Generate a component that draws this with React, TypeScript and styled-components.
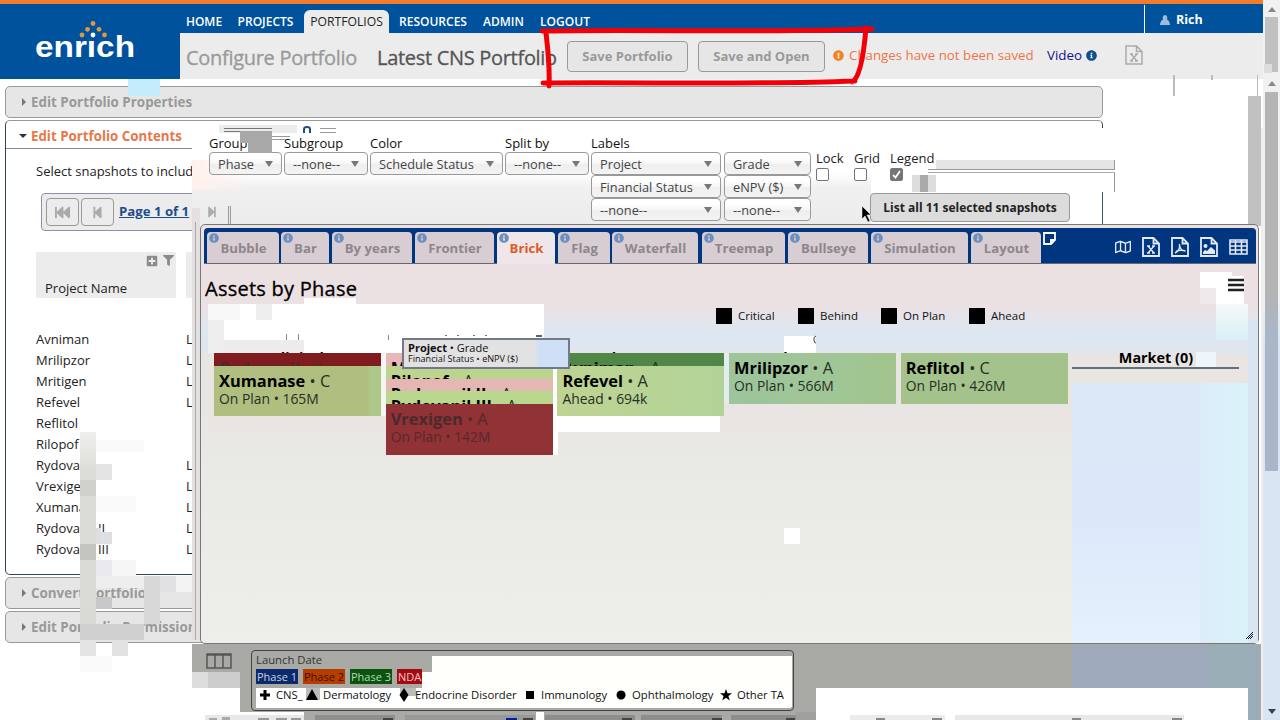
import React from 'react';
import styled, { createGlobalStyle, css } from 'styled-components';
import { FaInfoCircle, FaExclamationCircle, FaFilter, FaPlusSquare, FaRegMap, FaFastBackward, FaStepBackward, FaStepForward } from 'react-icons/fa';

const Global = createGlobalStyle`
  * { box-sizing: border-box; }
  body { margin: 0; background: #fff; font-family: 'Open Sans', sans-serif; overflow: hidden; color: #222; }
`;

const Screen = styled.div`
  position: relative; width: 1280px; height: 720px; overflow: hidden;
  display: flex; font-size: 13px; line-height: 18px; white-space: nowrap;
`;
const Main = styled.div`width: 1263px; flex: none;`;

/* ---------- header ---------- */
const Header = styled.header`
  height: 79px; border-top: 4px solid #f47a2c; display: flex; background: #ececec;
`;
const Brand = styled.div`width: 180px; height: 75px; background: #00529c;`;
const HeaderRight = styled.div`flex: 1;`;
const Nav = styled.nav`
  height: 29px; background: #00529c; display: flex; align-items: flex-end; padding-left: 1px;
`;
const NavItem = styled.a<{ $w: number; $on?: boolean }>`
  width: ${p => p.$w}px; height: 23px; line-height: 24px; text-align: center;
  font-size: 12px; font-weight: 600; color: #fff;
  ${p => p.$on && css`background: #ececec; color: #222; border-radius: 6px 6px 0 0; font-weight: 500; font-size: 12.2px;`}
`;
const User = styled.div`
  margin-left: auto; width: 119px; height: 28px; border-left: 1px solid #fff; padding: 2px 0 0 15px;
  display: flex; align-items: center; gap: 6px; color: #fff; font-weight: 700; font-size: 12.5px;
`;
const TitleBar = styled.div`height: 46px; display: flex; align-items: center; padding-left: 6px;`;
const Heading = styled.div<{ $w: number; $c: string }>`
  width: ${p => p.$w}px; font-size: 20px; line-height: 28px; color: ${p => p.$c}; padding-top: 3px; letter-spacing: -0.3px;
  -webkit-text-stroke: 0.3px ${p => p.$c};
`;
const GreyButton = styled.button<{ $w: number }>`
  width: ${p => p.$w}px; height: 31px; margin-right: 10px; border: 1px solid #999; border-radius: 4px;
  background: #e6e6e6; color: #999; font: 700 13px 'Open Sans', sans-serif; padding: 0;
`;
const Warning = styled.span`
  display: flex; align-items: center; gap: 5px; color: #ec7649; width: 214px; margin-left: -2px; font-size: 13.3px; padding-bottom: 2px;
  svg { color: #f58220; }
`;
const Video = styled.span`
  display: flex; align-items: center; gap: 4px; color: #12128a; width: 78px; padding-bottom: 2px; font-size: 13.4px;
  svg { color: #134f8d; }
`;
const ExportSlot = styled.span`display: flex; padding-bottom: 3px; color: #aaa;`;

/* ---------- accordion ---------- */
const Accordion = styled.main`width: 1103px; padding: 7px 0 0 5px; display: flex; flex-direction: column; gap: 2px;`;
const Bar = styled.div`
  height: 32px; border: 1px solid #999; border-radius: 5px; background: #e6e6e6; color: #999; font-size: 13.4px;
  font-weight: 700; display: flex; align-items: center; padding: 0 0 1px 16px; gap: 5px;
`;
const OpenPanel = styled.section`height: 455px; border: 1px solid #999; border-color: #999 #345 #345; border-radius: 5px;`;
const OpenTitle = styled.div`
  height: 28px; border-bottom: 1px solid #888; display: flex; align-items: center; gap: 4px; padding: 3px 0 0 13px;
  color: #e5784a; font-weight: 700; font-size: 13.3px;
`;
const Prompt = styled.p`margin: 13px 0 0 30px; height: 18px;`;
const Pager = styled.div`
  margin: 13px 0 0 35px; width: 190px; height: 38px; border: 1px solid #8a93a8; border-radius: 4px; background: #ececec;
  display: flex; align-items: center; padding-left: 4px; gap: 2px;
`;
const PageButton = styled.span`
  width: 33px; height: 28px; border: 1px solid #999; border-radius: 4px; display: grid; place-items: center; color: #aaa;
`;
const PageLink = styled.a`margin: -3px 0 0 3px; color: #1d4e89; font-weight: 700; font-size: 13.2px; text-decoration: underline;`;
const Grid = styled.div`display: grid; grid-template-columns: 140px 60px; column-gap: 10px; margin: 21px 0 0 30px;`;
const HeadCell = styled.div`
  height: 46px; background: #ececec; margin-bottom: 31px; padding: 3px 2px 1px 9px;
  display: flex; flex-direction: column; justify-content: space-between;
`;
const HeadIcons = styled.div`display: flex; justify-content: flex-end; gap: 5px; color: #8a8a8a; height: 12px;`;
const Cell = styled.div`height: 21px; line-height: 21px;`;

/* ---------- chart window ---------- */
const ChartLayer = styled.div`
  position: absolute; left: 192px; top: 128px; width: 1071px; height: 592px;
`;
const Controls = styled.div`
  height: 96px; padding: 6px 0 0 17px; display: flex; align-items: flex-start; gap: 2px;
  background: linear-gradient(90deg, #fff0ec, #fff0 60px) 0 32px / 100% 30px no-repeat,
    linear-gradient(#fff 0, #fff 45px, #f0f0f0 60px, #ececec 96px) 0 0 / 679px 100% no-repeat,
    linear-gradient(#fff, #fff);
`;
const Field = styled.div<{ $w: number }>`width: ${p => p.$w}px; display: flex; flex-direction: column;`;
const FieldLabel = styled.label`height: 18px; line-height: 18px; color: #111;`;
const Select = styled.div<{ $w: number }>`
  width: ${p => p.$w}px; height: 23px; border: 1px solid #999; border-radius: 4px;
  background: linear-gradient(#fff 20%, #f6f6f6 50%, #eee 52%, #f4f4f4); color: #444;
  display: flex; align-items: center; justify-content: space-between; padding: 0 8px 0 8px; font-size: 12.8px;
`;
const Down = styled.i`border: 4px solid transparent; border-top: 6px solid #777; border-bottom: 0;`;
const LabelSets = styled.div`display: grid; grid-template-columns: 130px 87px; column-gap: 3px;`;
const Toggle = styled.div<{ $w: number }>`
  width: ${p => p.$w}px; padding-top: 15px; display: flex; flex-direction: column; margin-left: 3px;
`;
const Check = styled.span<{ $on?: boolean }>`
  width: 13px; height: 13px; margin-top: 1px; border: 1px solid #767676; border-radius: 2px;
  background: ${p => (p.$on ? '#757575' : '#fff')}; display: grid; place-items: center;
`;
const ListButton = styled.button`
  position: absolute; left: 678px; top: 65px; width: 200px; height: 29px; border: 1px solid #999; border-radius: 4px;
  background: #dcdcdc; color: #222; font: 700 12px 'Open Sans', sans-serif; padding: 0;
`;
const Footer = styled.div`height: 76px; background: #a9aaa6; display: flex; padding: 6px 0 0 14px; gap: 19px;`;
const Window = styled.section`
  height: 420px; margin-left: 8px; width: 1059px; border: 1px solid #777; border-radius: 5px; padding: 3px 2px 0 3px;
  background: linear-gradient(#ece2e4 0, #ebe1e3 80px, #dde7f2 108px, #dee6ef 122px, #e9e5e2 134px, #e9e5e2 190px, #e9eae6 250px, #eeeeea 420px);
`;
const TabBar = styled.div`
  height: 36px; width: 1052px; background: #003580; border-radius: 4px 4px 0 0; border-bottom: 1px solid #667; display: flex; padding: 4px 0 0 3px;
`;
const Tab = styled.div<{ $w: number; $gap: number; $on?: boolean }>`
  position: relative; width: ${p => p.$w}px; margin-right: ${p => p.$gap}px; height: ${p => (p.$on ? 32 : 31)}px; flex: none;
  background: ${p => (p.$on ? '#efe6e9' : '#d8cdd3')}; color: ${p => (p.$on ? '#de5a28' : '#8d868c')};
  border-radius: 4px 4px 0 0; font-weight: 700; line-height: 33px; text-align: center; font-size: 13.2px; padding-left: 1px;
  svg { position: absolute; left: 2px; top: 1px; color: #6d8fbd; }
`;
const Tools = styled.div`margin-left: auto; display: flex; align-items: center; gap: 11px; padding: 0 8px 2px 0; color: #e3e9f3;`;
const ChartTitle = styled.div`
  display: flex; justify-content: space-between; padding: 11px 12px 0 1px; height: 41px; font-size: 20px; line-height: 28px; color: #000;
  letter-spacing: 0.25px; -webkit-text-stroke: 0.3px #000;
`;
const MenuIcon = styled.svg`margin-top: 2px;`;
const Legend = styled.div`display: flex; height: 22px; align-items: center; padding-left: 512px; font-size: 11.5px; color: #111;`;
const LegendItem = styled.div<{ $w: number }>`width: ${p => p.$w}px; display: flex; align-items: center; gap: 6px;`;
const Swatch = styled.i`width: 16px; height: 16px; background: #000;`;
const Board = styled.div`position: relative; display: flex; gap: 4.7px; padding: 21px 0 0 10px;`;
const Column = styled.div`width: 167px; flex: none;`;
const ColumnHead = styled.div`
  height: 20.5px; text-align: center; font-size: 14.4px; line-height: 19px; font-weight: 700; color: #000;
  border-bottom: 2px solid #647078; margin-bottom: -15.5px;
`;
const Brick = styled.div<{ $bg: string; $dim?: boolean }>`
  position: relative; height: 50.5px; padding: 5px 5px 0; background: ${p => p.$bg}; overflow: hidden;
  & + & { margin-top: -37.7px; }
  color: ${p => (p.$dim ? '#57292b' : '#243024')};
  strong { color: ${p => (p.$dim ? '#4a2a2c' : '#000')}; font-weight: 700; }
`;
const BrickName = styled.div`font-size: 16.4px; line-height: 20px;`;
const BrickInfo = styled.div`font-size: 13.9px; line-height: 15px;`;
const Tip = styled.div`
  position: absolute; left: 402px; top: 338px; width: 168px; height: 31px; border: 2px solid #707a88;
  background: linear-gradient(90deg, #e2e2e2 130px, #cfdff5 136px); padding: 1px 4px; font-size: 11px; line-height: 13px; color: #111;
  small { display: block; font-size: 9.1px; line-height: 10px; }
`;
const FootLegend = styled.div`
  width: 543px; height: 61px; border: 1px solid #444; border-radius: 4px; padding: 0 4px; color: #333; font-size: 11.3px;
`;
const ColumnsIcon = styled.svg`margin-top: 2px; flex: none;`;
const Chips = styled.div`display: flex; gap: 5px; height: 15px; margin-top: -1px; position: relative;`;
const Chip = styled.span<{ $bg: string; $w: number; $c: string }>`
  width: ${p => p.$w}px; height: 15px; line-height: 15px; background: ${p => p.$bg}; color: ${p => p.$c}; text-align: center; font-size: 11px;
`;
const Areas = styled.div`position: relative; display: flex; height: 20px; margin-top: 1px; align-items: center; color: #111; padding-left: 3px;`;
const Area = styled.span<{ $w: number }>`width: ${p => p.$w}px; display: flex; align-items: center; gap: 5px;`;

/* ---------- scroll bars, stray blocks ---------- */
const Scroll = styled.div`
  width: 17px; background: linear-gradient(#f1f1f1 300px, #dae5f3 345px); display: flex; flex-direction: column; align-items: center;
`;
const Arrow = styled.i<{ $down?: boolean; $m: number }>`
  margin-top: ${p => p.$m}px; border: 4px solid transparent;
  ${p => (p.$down ? 'border-top: 5px solid #345; border-bottom: 0;' : 'border-bottom: 5px solid #888; border-top: 0;')}
`;
const Thumb = styled.i<{ $h: number; $m: number; $bg: string }>`
  width: 13px; height: ${p => p.$h}px; margin-top: ${p => p.$m}px; background: ${p => p.$bg};
`;
const Block = styled.i<{ $x: number; $y: number; $w: number; $h: number; $bg: string }>`
  position: absolute; left: ${p => p.$x}px; top: ${p => p.$y}px; width: ${p => p.$w}px; height: ${p => p.$h}px; background: ${p => p.$bg};
`;
const Ink = styled.svg`position: absolute; left: 0; top: 0; pointer-events: none;`;
const NextPage = styled.span`position: absolute; left: 206px; top: 206px; color: #aaa; line-height: 0;`;
const BoardLayer = styled.div`position: absolute; left: 204px; top: 264px; width: 1052px;`;
const LegendLayer = styled.div`position: absolute; left: 256px; top: 670px; width: 540px; font-size: 11.3px;`;
const ShapeSvg = styled.svg`flex: none; overflow: visible;`;
const Shape = ({ d }: { d: string }) => <ShapeSvg width="12" height="12" viewBox="0 0 12 12"><path d={d} fill="#000" /></ShapeSvg>;

type B = [number, number, number, number, string];
const Blocks = ({ items }: { items: B[] }) => (
  <>{items.map(([x, y, w, h, bg], i) => <Block key={i} $x={x} $y={y} $w={w} $h={h} $bg={bg} />)}</>
);

const pageBlocks: B[] = [
  [128, 79, 32, 17, '#c4ecfc'],
  [1248, 96, 13, 130, '#c1c1c1'],
  [1173, 75, 2, 21, '#bbb'], [1211, 75, 2, 5, '#bbb'], [1257, 75, 1, 21, '#bbb'],
  [1264, 64, 8, 9, '#ddd'],
];
const leftBlocks: B[] = [
  [80, 432, 16, 240, 'linear-gradient(#efefed, #dcdcd8 40px, #d9d9d5 200px, #efefed)'],
  [96, 464, 16, 16, '#e4e4e4'], [80, 480, 16, 16, '#d0d0cc'],
  [96, 440, 48, 12, '#fafafa'], [96, 496, 40, 16, '#f9f9f9'],
  [96, 528, 5, 16, '#dfdfdf'], [101, 532, 11, 12, '#dfdfdf'], [102, 532, 2, 12, '#cfe6f4'], [80, 544, 16, 16, '#c4c4c0'],
  [96, 520, 3, 8, '#fff'], [96, 544, 2, 12, '#fff'],
  [96, 560, 16, 16, '#eaeaee'], [112, 560, 24, 16, '#f6f6f6'], [96, 576, 48, 12, '#eeeeee'],
  [144, 576, 16, 48, '#d8d8d8'], [160, 576, 16, 16, '#e1e1e4'], [176, 576, 16, 16, '#f3f3f3'],
  [96, 597, 16, 12, '#c8c8cb'], [80, 624, 64, 16, '#d0d0d0'], [112, 640, 16, 16, '#e2e2e2'],
  [80, 656, 32, 16, '#fafafa'], [80, 640, 16, 16, '#e4e4e4'],
];
const controlBlocks: B[] = [
  [219, 125, 78, 8, '#ececec'], [224, 128, 48, 1, '#777'], [224, 131, 48, 1, '#777'],
  [240, 131, 32, 12, '#a8a8a8'], [248, 143, 24, 10, '#a8a8a8'], [272, 136, 18, 1, '#999'], [272, 139, 14, 1, '#999'],
  [320, 128, 16, 1, '#999'], [320, 132, 16, 1, '#999'],
  [192, 208, 8, 432, '#e4e0df'], [195, 222, 1, 418, '#aaa'],
  [936, 160, 178, 9, '#e5e5e5'], [928, 169, 187, 1, '#999'], [928, 172, 187, 1, '#aaa'],
  [1114, 160, 1, 10, '#999'], [1114, 173, 1, 19, '#999'],
  [912, 175, 24, 17, '#ddd'], [920, 175, 8, 17, '#aaa'], [1102, 192, 1, 32, '#456'],
  [1248, 128, 15, 96, '#c1c1c1'], [1261, 128, 2, 592, '#eee'],
  [228, 206, 1, 18, '#999'], [230, 206, 1, 18, '#999'],
];
const boardBlocks: B[] = [
  [208, 304, 336, 49, '#fff'], [304, 298, 52, 8, '#fff'],
  [208, 304, 32, 16, '#f8f8f8'], [256, 304, 16, 16, '#eeeeee'], [208, 320, 16, 33, '#eee'], [224, 340, 80, 13, '#ececec'],
  [784, 336, 32, 17, '#fff'],
  [381, 353, 5, 63, '#f4f6f4'], [553, 353, 5, 102, '#fff'], [558, 400, 162, 32, '#fff'], [724, 353, 5, 50, '#e3edf0'],
  [1072, 368, 128, 15, '#e7e7df'], [1072, 383, 176, 260, 'linear-gradient(#dbe8f8, #dce9fa 150px, #e3f2fd)'],
  [1200, 383, 48, 260, 'linear-gradient(90deg, #dcecf9, #daf2fa)'],
  [1248, 320, 10, 323, '#d8e5f3'],
  [1200, 272, 32, 16, '#fff'], [1216, 276, 28, 28, '#fff'], [1200, 288, 16, 16, '#eee9ea'], [1216, 304, 32, 36, 'linear-gradient(#f5f8f8, #d9f0f8)'],
  [1196, 352, 20, 15, '#eef6fb'],
  [784, 528, 16, 16, '#fff'],
  [286, 334, 1, 6, '#888'], [298, 334, 1, 6, '#888'], [388, 335, 1, 5, '#888'],
  [536, 335, 6, 2, '#567'], [445, 335, 2, 1, '#777'], [457, 335, 2, 1, '#777'], [473, 335, 2, 1, '#777'], [485, 335, 2, 1, '#777'],
];
const footBlocks: B[] = [
  [192, 688, 48, 32, '#fff'], [192, 672, 48, 16, '#ccc'], [192, 672, 16, 16, '#ddd'],
  [256, 688, 535, 20, '#fff'], [432, 656, 360, 51, '#fffffc'], [422, 672, 10, 16, '#fff'],
  [306, 688, 14, 12, '#bbb'], [400, 688, 16, 8, '#bbb'],
  [816, 688, 432, 32, '#fff'], [1072, 645, 176, 43, '#9eaabb'], [1248, 645, 11, 75, '#9aabba'],
  [1208, 645, 40, 43, '#9aaeb8'], [192, 712, 112, 8, '#fff'],
  [205, 715, 99, 5, '#e8e8e8'], [315, 715, 80, 5, '#8f8f8f'], [405, 715, 130, 5, '#999'], [536, 712, 8, 8, '#fff'],
  [545, 715, 90, 5, '#8d8d8d'], [641, 715, 81, 5, '#8d8d8d'], [731, 715, 65, 5, '#8d8d8d'],
  [804, 715, 141, 5, '#ececec'], [796, 712, 20, 8, '#a0a19e'], [816, 712, 34, 8, '#fff'], [955, 715, 229, 5, '#e8e8e8'],
  [209, 718, 8, 2, '#aaa'], [222, 717, 8, 3, '#aaa'],
  [258, 718, 11, 2, '#999'], [276, 718, 11, 2, '#999'], [291, 718, 10, 2, '#999'], [383, 718, 10, 2, '#444'],
  [506, 718, 11, 2, '#0a1c96'], [523, 718, 10, 2, '#444'], [622, 718, 10, 2, '#444'], [712, 718, 10, 2, '#444'],
  [786, 718, 9, 2, '#444'], [876, 718, 9, 2, '#888'], [1072, 718, 9, 2, '#888'], [932, 718, 10, 2, '#888'], [1172, 718, 10, 2, '#888'],
];

const FileIcon = ({ kind, thin }: { kind: 'x' | 'pdf' | 'img'; thin?: boolean }) => (
  <svg width="18" height="20" viewBox="0 0 18 20" fill="none" stroke="currentColor" strokeWidth={thin ? 1.5 : 1.8}>
    <path d="M1 1h10.500L17 6.500V19H1zM11.500 1v5.500H17" />
    {kind === 'x' && <path d="M6 9l6 7M12 9l-6 7M5 9h3M10 9h3M5 16h3M10 16h3" strokeWidth="1.400" />}
    {kind === 'pdf' && <path d="M4 16c4-2 5-6 4.500-9M8.500 8c.5 4 3 6 6 6M5 14.500c3-1.500 6-1.500 9-.8" strokeWidth="1.400" />}
    {kind === 'img' && <><circle cx="5.500" cy="9" r="2" fill="currentColor" stroke="none" /><path d="M3 17v-2l2-2 2 1 4-4 4 3.500V17z" fill="currentColor" stroke="none" /></>}
  </svg>
);

const selects: [string, number, string][] = [['Group', 73, 'Phase'], ['Subgroup', 84, '--none--'], ['Color', 133, 'Schedule Status'], ['Split by', 84, '--none--']];
const tabs: [string, number, number][] = [['Bubble', 72, 2], ['Bar', 48, 3], ['By years', 80, 3], ['Frontier', 79, 3], ['Brick', 58, 3], ['Flag', 52, 2], ['Waterfall', 86, 4], ['Treemap', 83, 3], ['Bullseye', 80, 3], ['Simulation', 97, 3], ['Layout', 70, 2]];
const projects = ['Avniman', 'Mrilipzor', 'Mritigen', 'Refevel', 'Reflitol', 'Rilopof', 'Rydovanil', 'Vrexigen', 'Xumanase', 'Rydovanil II', 'Rydovanil III'];

type BrickData = [string, string, string, string, boolean?];
const columns: [string, BrickData[]][] = [
  ['Preclinical (2)', [['Rydovanil', 'A', '', '#7f1c1f', true], ['Xumanase', 'C', 'On Plan • 165M', 'linear-gradient(90deg,#b0be7f 154px,#aec788 155px)']]],
  ['Phase 1 (5)', [['Mritigen', 'A', '', '#e8b8b8'], ['Rilopof', 'A', '', '#bcd48e'], ['Rydovanil II', 'A', '', '#e5b7b4'], ['Rydovanil III', 'A', '', '#b9d78d'], ['Vrexigen', 'A', 'On Plan • 142M', '#903236', true]]],
  ['Phase 2 (2)', [['Avniman', 'A', '', '#518746', false], ['Refevel', 'A', 'Ahead • 694k', 'linear-gradient(90deg,#bfd392,#b2d398)']]],
  ['Phase 3 (1)', [['Mrilipzor', 'A', 'On Plan • 566M', 'linear-gradient(90deg,#9dc49b,#a0c696 110px,#a2c38c)']]],
  ['NDA (1)', [['Reflitol', 'C', 'On Plan • 426M', '#a4c28b']]],
  ['Market (0)', []],
];

const Triangle = ({ open }: { open?: boolean }) => (
  <svg width={open ? 8 : 4} height="8" viewBox={open ? '0 0 8 8' : '0 0 4 8'}>
    <path d={open ? 'M0 2h8L4 6z' : 'M0 0l4 4-4 4z'} fill={open ? '#333' : '#777'} />
  </svg>
);

export default function App() {
  return (
    <Screen>
      <Global />
      <Main>
        <Header>
          <Brand>
            <svg width="180" height="75" viewBox="0 4 180 75">
              <text x="35" y="57" fontFamily="Liberation Sans" fontWeight="700" fontSize="29" fill="#fff" textLength="100" lengthAdjust="spacingAndGlyphs">enrıch</text>
              {[[93, 23.5], [87.5, 29.3], [99, 29.3], [82, 35], [104.5, 35]].map(([x, y]) => <circle key={x} cx={x} cy={y} r="2.4" fill="#e0983c" />)}
              <circle cx="93" cy="35" r="2.400" fill="#fff" />
            </svg>
          </Brand>
          <HeaderRight>
            <Nav>
              <NavItem $w={46}>HOME</NavItem><NavItem $w={77}>PROJECTS</NavItem><NavItem $w={85} $on>PORTFOLIOS</NavItem>
              <NavItem $w={88}>RESOURCES</NavItem><NavItem $w={53}>ADMIN</NavItem><NavItem $w={70}>LOGOUT</NavItem>
              <User>
                <svg width="10" height="10" viewBox="0 0 10 10"><path d="M5 0a2.500 2.800 0 0 1 1.800 4.600C9 5.500 9.700 7 10 10H0c.3-3 1-4.500 3.200-5.400A2.500 2.800 0 0 1 5 0z" fill="#9dbbe0" /></svg>
                Rich
              </User>
            </Nav>
            <TitleBar>
              <Heading $w={191} $c="#999">Configure Portfolio</Heading>
              <Heading $w={190} $c="#555">Latest CNS Portfolio</Heading>
              <GreyButton $w={121}>Save Portfolio</GreyButton>
              <GreyButton $w={127}>Save and Open</GreyButton>
              <Warning><FaExclamationCircle size={11} />Changes have not been saved</Warning>
              <Video>Video <FaInfoCircle size={11} /></Video>
              <ExportSlot><FileIcon kind="x" thin /></ExportSlot>
            </TitleBar>
          </HeaderRight>
        </Header>
        <Accordion>
          <Bar><Triangle />Edit Portfolio Properties</Bar>
          <OpenPanel>
            <OpenTitle><Triangle open />Edit Portfolio Contents</OpenTitle>
            <Prompt>Select snapshots to include</Prompt>
            <Pager>
              <PageButton><FaFastBackward size={15} /></PageButton><PageButton><FaStepBackward size={13} /></PageButton>
              <PageLink>Page 1 of 1</PageLink>
            </Pager>
            <Grid>
              <HeadCell><HeadIcons><FaPlusSquare size={12} /><FaFilter size={11} /></HeadIcons>Project Name</HeadCell>
              <HeadCell />
              {projects.map((p, i) => (
                <React.Fragment key={i}>
                  <Cell>{p}</Cell>
                  <Cell>{i === 4 || i === 5 ? '' : 'L'}</Cell>
                </React.Fragment>
              ))}
            </Grid>
          </OpenPanel>
          <Bar><Triangle />Convert Portfolio</Bar>
          <Bar><Triangle />Edit Portfolio Permissions</Bar>
        </Accordion>
      </Main>
      <Scroll>
        <Arrow $m={7} /><Thumb $h={55} $m={5} $bg="#c1c1c1" /><Arrow $m={9} />
        <Thumb $h={379} $m={6} $bg="linear-gradient(#b4b4b4 200px, #a9b6c8 245px)" /><Arrow $down $m={238} />
      </Scroll>
      <Blocks items={pageBlocks} />
      <Blocks items={leftBlocks} />

      <ChartLayer>
        <Controls>
          {selects.map(([l, w, v]) => (
            <Field key={l} $w={w}><FieldLabel>{l}</FieldLabel><Select $w={w}>{v}<Down /></Select></Field>
          ))}
          <Field $w={220}>
            <FieldLabel>Labels</FieldLabel>
            <LabelSets>
              {['Project', 'Grade', 'Financial Status', 'eNPV ($)', '--none--', '--none--'].map((v, i) => <Select key={i} $w={i % 2 ? 87 : 130}>{v}<Down /></Select>)}
            </LabelSets>
          </Field>
          <Toggle $w={33}>Lock<Check /></Toggle>
          <Toggle $w={31}>Grid<Check /></Toggle>
          <Toggle $w={50}>Legend<Check $on><svg width="9" height="9" viewBox="0 0 9 9"><path d="M1 5l2.500 2.500L8 1" fill="none" stroke="#fff" strokeWidth="1.800" /></svg></Check></Toggle>
        </Controls>
        <ListButton>List all 11 selected snapshots</ListButton>
        <Window>
          <TabBar>
            {tabs.map(([t, w, g]) => <Tab key={t} $w={w} $gap={g} $on={t === 'Brick'}><FaInfoCircle size={10} />{t}</Tab>)}
            <svg width="13" height="13" viewBox="0 0 13 13" fill="none" stroke="#fff" strokeWidth="1.800"><path d="M1 1h11v7l-4 4H1zM12 8H8v4" /></svg>
            <Tools>
              <FaRegMap size={16} /><FileIcon kind="x" /><FileIcon kind="pdf" /><FileIcon kind="img" />
              <svg width="19" height="16" viewBox="0 0 19 16" fill="none" stroke="currentColor" strokeWidth="1.600"><path d="M1 1h17v14H1zM1 3h17M1 7h17M1 11h17M6.500 1v14M12.500 1v14" /></svg>
            </Tools>
          </TabBar>
        </Window>
        <Footer>
          <ColumnsIcon width="26" height="18" viewBox="0 0 26 18" fill="none" stroke="#555" strokeWidth="1.500"><path d="M1 2h24v14H1zM1 3h24M9 3v13M17 3v13" /></ColumnsIcon>
          <FootLegend>Launch Date</FootLegend>
        </Footer>
      </ChartLayer>

      <Blocks items={controlBlocks} />
      <NextPage><FaStepForward size={12} /></NextPage>
      <Blocks items={boardBlocks} />
      <Blocks items={footBlocks} />
      <BoardLayer>
        <ChartTitle>
          <span>Assets by Phase</span>
          <MenuIcon width="16" height="16" viewBox="0 0 16 16"><path d="M0 3h16M0 8h16M0 13h16" stroke="#222" strokeWidth="2.400" /></MenuIcon>
        </ChartTitle>
        <Legend>
          <LegendItem $w={82}><Swatch />Critical</LegendItem><LegendItem $w={83}><Swatch />Behind</LegendItem>
          <LegendItem $w={88}><Swatch />On Plan</LegendItem><LegendItem $w={70}><Swatch />Ahead</LegendItem>
        </Legend>
        <Board>
          {columns.map(([name, bricks]) => (
            <Column key={name}>
              <ColumnHead>{name}</ColumnHead>
              {bricks.map(([n, g, info, bg, dim]) => (
                <Brick key={n} $bg={bg} $dim={dim}><BrickName><strong>{n}</strong> • {g}</BrickName><BrickInfo>{info}</BrickInfo></Brick>
              ))}
            </Column>
          ))}
        </Board>
      </BoardLayer>
      <LegendLayer>
        <Chips>
          <Chip $w={42} $bg="#0a2a6b" $c="#c7d3e6">Phase 1</Chip><Chip $w={42} $bg="#b83c00" $c="#3a1500">Phase 2</Chip>
          <Chip $w={42} $bg="#0b5410" $c="#b7d9b7">Phase 3</Chip><Chip $w={25} $bg="#a50a10" $c="#f2c6c6">NDA</Chip>
        </Chips>
        <Areas>
          <Area $w={47}><Shape d="M4.500 1h3v3.500H11v3H7.500V11h-3V7.500H1v-3h3.500z" />CNS_</Area>
          <Area $w={92}><Shape d="M6 0l6 11H0z" />Dermatology</Area>
          <Area $w={126}><Shape d="M6-1l4.500 7L6 13 1.500 6z" />Endocrine Disorder</Area>
          <Area $w={91}><Shape d="M2 2h8v8H2z" />Immunology</Area>
          <Area $w={105}><Shape d="M6 1.500a4.500 4.500 0 1 0 .1 0z" />Ophthalmology</Area>
          <Area $w={75}><Shape d="M6 0l1.500 4.300H12L8.400 7l1.400 4.500L6 8.800 2.200 11.500 3.600 7 0 4.300h4.500z" />Other TA</Area>
        </Areas>
      </LegendLayer>
      <Tip><b>Project</b> • Grade<small>Financial Status • eNPV ($)</small></Tip>
      <Ink width="1280" height="720" viewBox="0 0 1280 720" fill="none">
        <path d="M542 31C640 29 760 33 872 29M546 33C548 50 550 66 549 86M543 83C650 82 750 85 855 81M866 28C864 52 860 78 852 82" stroke="#f20008" strokeWidth="5" strokeLinecap="round" />
        <path d="M862 206v13l3-3 3 6 2-1-3-6h4z" fill="#000" stroke="#fff" strokeWidth="0.500" />
        <path d="M1246 639l7-7M1248 639l5-5M1250 639l3-3" stroke="#123" />
        <path d="M304 133v-4q0-2 3-2t3 2v4" stroke="#1d4e89" strokeWidth="2" />
        <path d="M816 336q-3 1-2 4q0 3 2 3" stroke="#345" />
      </Ink>
    </Screen>
  );
}
